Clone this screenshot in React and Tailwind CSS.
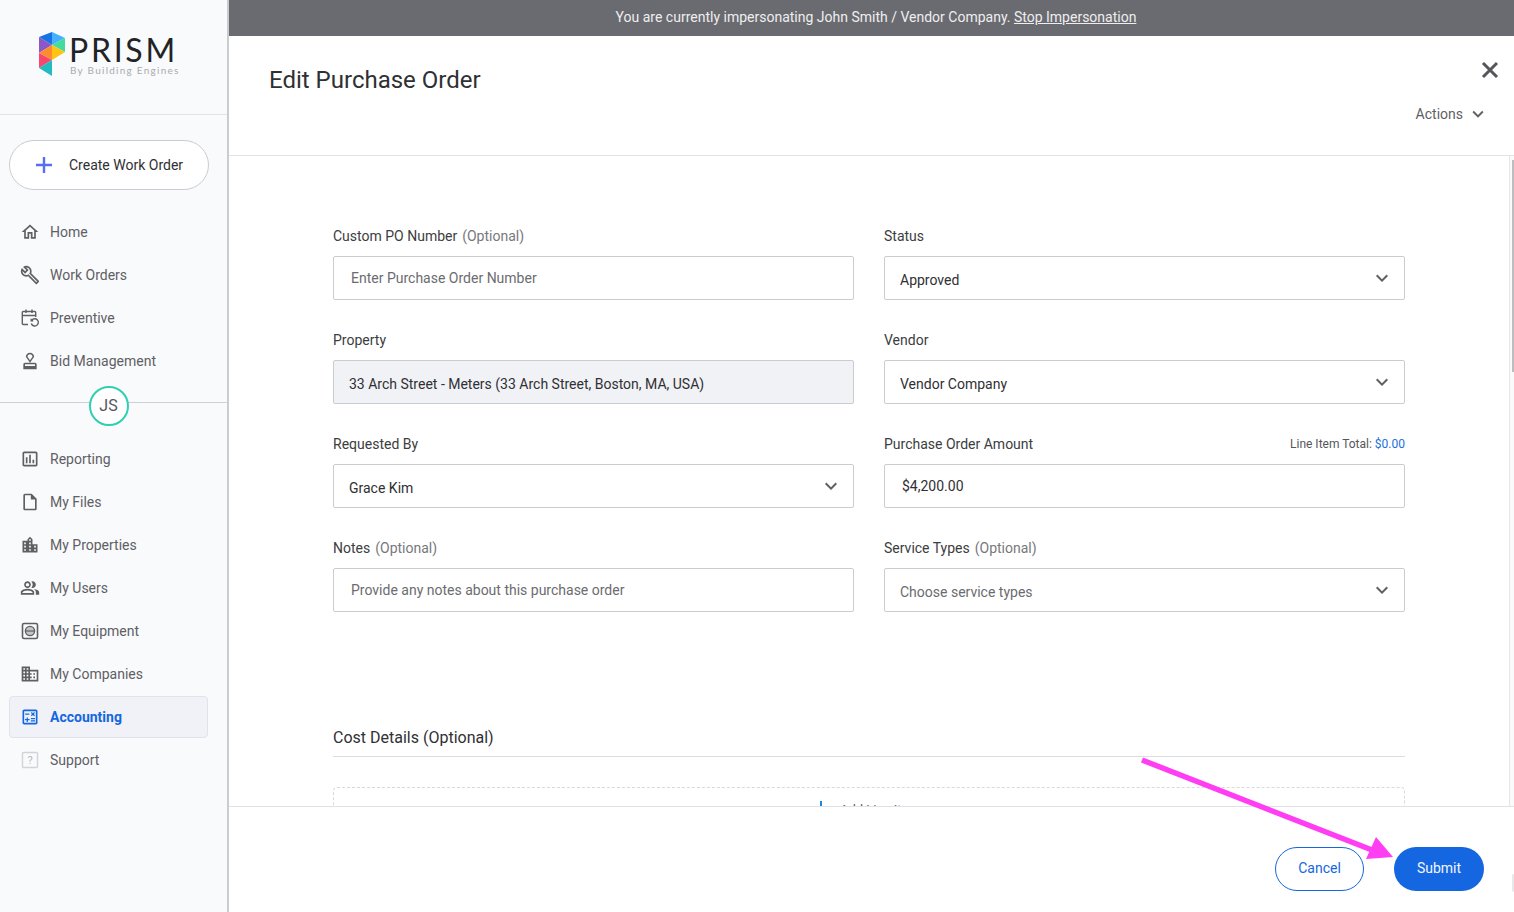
import React from 'react';
import {
  MdOutlineHome,
  MdOutlineBuild,
  MdOutlineApproval,
  MdOutlineAssessment,
  MdOutlineInsertDriveFile,
  MdLocationCity,
  MdOutlinePeopleAlt,
  MdOutlineDomain,
  MdOutlineCalculate,
  MdKeyboardArrowDown,
} from 'react-icons/md';

const PreventiveIcon = () => (
  <svg width="20" height="20" viewBox="0 0 20 20" fill="none" stroke="#5f6064" strokeWidth="1.4">
    <path d="M8 16.5H3.2a.9.9 0 0 1-.9-.9V4.4a.9.9 0 0 1 .9-.9h11.6a.9.9 0 0 1 .9.9V9" />
    <path d="M2.3 7.5h13.4M6 1.5v3.5M12 1.5v3.5" />
    <path d="M11.3 15.5a3.6 3.6 0 1 0 .5-3.2" />
    <path d="M11.2 10.8v2h2" />
  </svg>
);

const EquipmentIcon = () => (
  <svg width="18" height="18" viewBox="0 0 18 18" fill="none" stroke="#5f6064">
    <rect x="1.5" y="1.5" width="15" height="15" rx="1.5" strokeWidth="1.6" />
    <circle cx="9" cy="9" r="4.6" fill="#5f6064" fillOpacity="0.35" strokeWidth="1.4" />
    <path d="M4.6 9h8.8" strokeWidth="1.2" />
  </svg>
);

const SupportIcon = () => (
  <svg width="18" height="18" viewBox="0 0 18 18" fill="none">
    <rect x="1.5" y="1.5" width="15" height="15" rx="1" stroke="#d2d3d8" strokeWidth="1.4" />
    <text x="9" y="13" textAnchor="middle" fontSize="11" fill="#b8b9be" fontFamily="Roboto">?</text>
  </svg>
);

const Logo = () => (
  <div className="flex items-start pl-[39px] pt-[31px] h-[115px] border-b border-[#e2e3e9]">
    <svg width="28" height="46" viewBox="39 31 28 46" className="shrink-0">
      <polygon points="39,37 52,32 52,45" fill="#1673e6" />
      <polygon points="52,32 65,38 52,45" fill="#45b0fb" />
      <polygon points="39,37 52,45 39,53" fill="#8c58c8" />
      <polygon points="65,38 65,52 52,45" fill="#42dc9c" />
      <polygon points="39,53 52,45 52,60" fill="#fb8d2c" />
      <polygon points="52,45 65,52 52,60" fill="#fdc416" />
      <polygon points="39,53 52,60 39,68" fill="#f8476c" />
      <polygon points="39,68 52,60 52,76" fill="#22bcc0" />
    </svg>
    <div className="ml-[2px] font-['Lato',sans-serif]">
      <div className="text-[32px] leading-[28px] mt-[5px] tracking-[2.7px] text-[#222326] font-normal">PRISM</div>
      <div className="text-[10px] leading-[12px] ml-px tracking-[1.25px] text-[#a9aaae]">By Building Engines</div>
    </div>
  </div>
);

const NavItem = ({ icon, label, active }) => (
  <div
    className={`flex items-center h-[42px] mb-px pl-[9px] rounded border ${
      active ? 'bg-[#f1f2f7] border-[#e2e3ea] text-[#1467e0] font-bold' : 'border-transparent text-[#5f6064]'
    }`}
  >
    <span className="flex items-center justify-center w-[22px] h-[22px]">{icon}</span>
    <span className="ml-[9px] text-[14px]">{label}</span>
  </div>
);

const topNav = [
  { label: 'Home', icon: <MdOutlineHome size={20} /> },
  { label: 'Work Orders', icon: <MdOutlineBuild size={20} /> },
  { label: 'Preventive', icon: <PreventiveIcon /> },
  { label: 'Bid Management', icon: <MdOutlineApproval size={20} /> },
];

const bottomNav = [
  { label: 'Reporting', icon: <MdOutlineAssessment size={20} /> },
  { label: 'My Files', icon: <MdOutlineInsertDriveFile size={20} /> },
  { label: 'My Properties', icon: <MdLocationCity size={20} /> },
  { label: 'My Users', icon: <MdOutlinePeopleAlt size={20} /> },
  { label: 'My Equipment', icon: <EquipmentIcon /> },
  { label: 'My Companies', icon: <MdOutlineDomain size={20} /> },
  { label: 'Accounting', icon: <MdOutlineCalculate size={20} />, active: true },
  { label: 'Support', icon: <SupportIcon /> },
];

const Sidebar = () => (
  <aside className="w-[229px] shrink-0 h-full bg-[#f9fafc] border-r-2 border-[#cbccd2]">
    <Logo />
    <div className="pl-[9px] pr-[19px] pt-[25px]">
      <button className="flex items-center w-[200px] h-[50px] bg-white rounded-full border border-[#cbccd1] pl-[25px]">
        <svg width="18" height="18" viewBox="0 0 18 18">
          <path d="M9 1v16M1 9h16" stroke="#5a6cf2" strokeWidth="2.4" />
        </svg>
        <span className="ml-[16px] text-[14px] text-[#2f3033]">Create Work Order</span>
      </button>
      <div className="mt-[21px]">
        {topNav.map((item) => (
          <NavItem key={item.label} {...item} />
        ))}
      </div>
    </div>
    <div className="relative h-px mt-[20px] bg-[#cfd0d5]">
      <div className="absolute left-[89px] -top-[16px] flex items-center justify-center w-[40px] h-[40px] pr-px rounded-full bg-white border-2 border-[#2fcfb2] text-[16px] text-[#55565a]">
        JS
      </div>
    </div>
    <div className="pl-[9px] pr-[19px] pt-[35px]">
      {bottomNav.map((item) => (
        <NavItem key={item.label} {...item} />
      ))}
    </div>
  </aside>
);

const Label = ({ text, optional, right }) => (
  <div className="flex items-center justify-between h-[20px] mb-[10px] text-[14px] text-[#3c3d40]">
    <div>
      {text}
      {optional && <span className="ml-[5px] text-[#77787c]">(Optional)</span>}
    </div>
    {right}
  </div>
);

const Input = ({ value, placeholder, className = 'pl-[17px]' }) => (
  <div className={`flex items-center h-[44px] border border-[#cbccd1] rounded-[2px] text-[14px] ${className} ${placeholder ? 'text-[#6b6c70]' : 'text-[#2f3033]'}`}>
    {value || placeholder}
  </div>
);

const Select = ({ value, placeholder }) => (
  <div className="flex items-center justify-between h-[44px] border border-[#cbccd1] rounded-[2px] pl-[15px] pr-[10px]">
    <span className={`text-[14px] mt-[4px] ${placeholder ? 'text-[#6b6c70]' : 'text-[#2f3033]'}`}>{value || placeholder}</span>
    <MdKeyboardArrowDown size={24} className="text-[#5f6064]" />
  </div>
);

const Form = () => (
  <div className="grid grid-cols-[521px_521px] gap-x-[30px] gap-y-[30px]">
    <div>
      <Label text="Custom PO Number" optional />
      <Input placeholder="Enter Purchase Order Number" />
    </div>
    <div>
      <Label text="Status" />
      <Select value="Approved" />
    </div>
    <div>
      <Label text="Property" />
      <div className="flex items-center h-[44px] pl-[15px] pt-[4px] bg-[#f1f2f6] border border-[#cbccd1] rounded-[2px] text-[14px] text-[#2f3033]">
        33 Arch Street - Meters (33 Arch Street, Boston, MA, USA)
      </div>
    </div>
    <div>
      <Label text="Vendor" />
      <Select value="Vendor Company" />
    </div>
    <div>
      <Label text="Requested By" />
      <Select value="Grace Kim" />
    </div>
    <div>
      <Label
        text="Purchase Order Amount"
        right={
          <span className="text-[12px] text-[#55565a]">
            Line Item Total: <span className="text-[#1a6fe0]">$0.00</span>
          </span>
        }
      />
      <Input value="$4,200.00" className="pl-[17px]" />
    </div>
    <div>
      <Label text="Notes" optional />
      <Input placeholder="Provide any notes about this purchase order" />
    </div>
    <div>
      <Label text="Service Types" optional />
      <Select placeholder="Choose service types" />
    </div>
  </div>
);

export default function App() {
  return (
    <div className="relative flex w-full h-screen overflow-hidden bg-white font-['Roboto',sans-serif]">
      <Sidebar />
      <main className="flex-1 min-w-0 flex flex-col h-full">
        <div className="flex items-center justify-center shrink-0 h-[36px] pl-[9px] pb-[2px] bg-[#6a6b70] text-[14px] text-[#eeeeef]">
          You are currently impersonating John Smith / Vendor Company.&nbsp;<span className="underline">Stop Impersonation</span>
        </div>
        <header className="flex justify-between shrink-0 h-[120px] border-b border-[#e2e3e7] pl-[40px] pr-[26px]">
          <h1 className="mt-[28px] text-[24px] leading-[32px] text-[#2f3033]">Edit Purchase Order</h1>
          <div className="flex flex-col items-end">
            <svg width="18" height="18" viewBox="0 0 18 18" className="mt-[25px] -mr-[11px]">
              <path d="M2 2l14 14M16 2L2 16" stroke="#55565a" strokeWidth="3" />
            </svg>
            <div className="flex items-center mt-[24px] text-[14px] text-[#5f6064]">
              Actions
              <MdKeyboardArrowDown size={22} className="ml-[4px] -mr-px" />
            </div>
          </div>
        </header>
        <div className="relative flex-1 min-h-0 overflow-hidden pl-[104px] pt-[70px]">
          <Form />
          <div className="w-[1072px] mt-[114px] pb-[6px] border-b border-[#dcdde2] text-[16px] leading-[24px] text-[#2f3033]">
            Cost Details (Optional)
          </div>
          <div className="flex w-[1072px] h-[44px] mt-[30px] pt-[13px] pl-[480px] border border-dashed border-[#d8d9dc] rounded text-[13px] leading-[20px] text-[#5f6064]">
            <svg width="14" height="14" viewBox="0 0 14 14" className="shrink-0">
              <path d="M7 0v14M0 7h14" stroke="#1a8ae0" strokeWidth="2" />
            </svg>
            <span className="ml-[12px] -mt-px">Add Line Item</span>
          </div>
          {/* scrollbar track and thumb */}
          <div className="absolute right-0 top-0 bottom-0 w-[5px] bg-[#fafafa] border-l border-[#e6e6e8]">
            <div className="absolute right-0 top-[4px] w-[2px] h-[212px] bg-[#bdbdc0]" />
          </div>
        </div>
        <footer className="relative flex justify-end shrink-0 h-[106px] border-t border-[#e2e1ea] pt-[40px] pr-[30px]">
          <button className="w-[89px] h-[44px] pb-[2px] rounded-full border border-[#1467e0] text-[14px] text-[#1467e0]">Cancel</button>
          <button className="w-[90px] h-[44px] pb-[2px] ml-[30px] rounded-full bg-[#1467e0] text-[14px] text-[#f2f6fd]">Submit</button>
          <div className="absolute right-0 top-[67px] w-[2px] h-[18px] rounded-l bg-[#e8e8ea]" />
        </footer>
      </main>
      {/* annotation arrow over the footer */}
      <svg className="absolute left-[1130px] top-[750px] pointer-events-none" width="280" height="120" viewBox="1130 750 280 120">
        <path d="M1142 760L1372 850" stroke="#ff3df2" strokeWidth="5.5" fill="none" />
        <polygon points="1376,837 1393,857 1366,859" fill="#ff3df2" />
      </svg>
    </div>
  );
}
